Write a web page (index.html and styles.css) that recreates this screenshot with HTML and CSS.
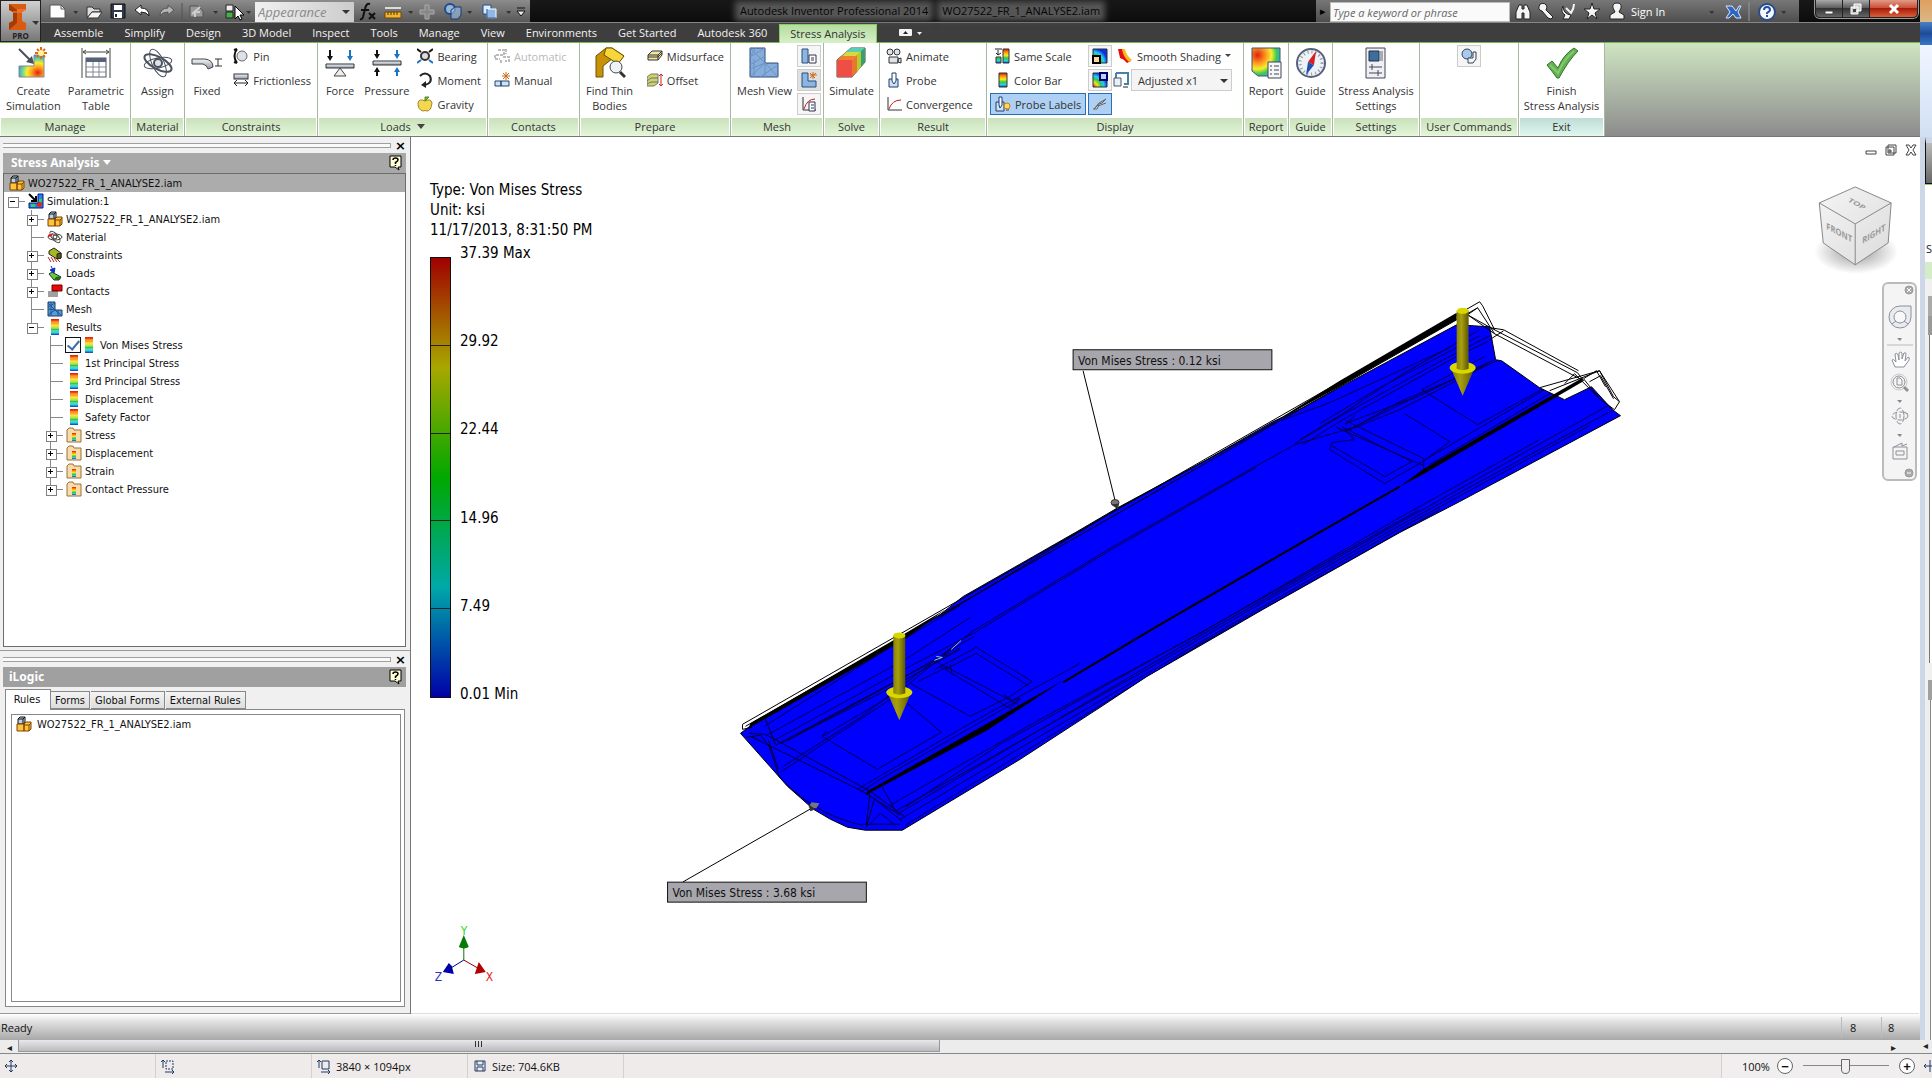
FILE: index.html
```html
<!DOCTYPE html>
<html lang="en">
<head>
<meta charset="utf-8">
<title>Autodesk Inventor Professional 2014 - WO27522_FR_1_ANALYSE2.iam</title>
<link rel="stylesheet" href="styles.css">
</head>
<body>
<svg class="defs" aria-hidden="true">
  <defs>
    <linearGradient id="rainbow" x1="0" y1="0" x2="0" y2="1"><stop offset="0" stop-color="#e01800"/><stop offset=".25" stop-color="#ff9a10"/><stop offset=".45" stop-color="#f4ec20"/><stop offset=".65" stop-color="#30c848"/><stop offset=".85" stop-color="#20d8e8"/><stop offset="1" stop-color="#1830c0"/></linearGradient>
    <radialGradient id="heat" cx=".2" cy=".25" r="1"><stop offset="0" stop-color="#e02010"/><stop offset=".3" stop-color="#ff9a20"/><stop offset=".5" stop-color="#f6ee30"/><stop offset=".68" stop-color="#40c850"/><stop offset=".85" stop-color="#30b0f0"/><stop offset="1" stop-color="#2040d0"/></radialGradient>
    <radialGradient id="heat3" cx=".75" cy=".8" r=".8"><stop offset="0" stop-color="#e02010"/><stop offset=".3" stop-color="#ff9a20"/><stop offset=".55" stop-color="#f6ee30"/><stop offset=".8" stop-color="#60d0a0"/><stop offset="1" stop-color="#3090f0"/></radialGradient>
    <radialGradient id="heat2" cx="0" cy="1" r="1.3"><stop offset="0" stop-color="#e02010"/><stop offset=".25" stop-color="#f8e020"/><stop offset=".45" stop-color="#30c850"/><stop offset=".6" stop-color="#20d0f0"/><stop offset=".8" stop-color="#1030e0"/></radialGradient>
    <linearGradient id="steel" x1="0" y1="0" x2="0" y2="1"><stop offset="0" stop-color="#f4f6f9"/><stop offset="1" stop-color="#8f9aaa"/></linearGradient>
    <linearGradient id="gold" x1="0" y1="0" x2="1" y2="0"><stop offset="0" stop-color="#8a8200"/><stop offset=".4" stop-color="#a8a010"/><stop offset="1" stop-color="#5c5600"/></linearGradient>
    <symbol id="i-asm" viewBox="0 0 16 16"><path d="M2 3l2-2h5v5l-1 2H2z" fill="#b9d0e8" stroke="#111"/><path d="M2 3h5v5M7 3l2-2" fill="none" stroke="#111"/><path d="M1 8h7v7H1zM8 8l2-2h5v7l-2 2H8z" fill="#ffc23c" stroke="#7a4300"/><path d="M8 9h5v6M13 9l2-2" fill="none" stroke="#7a4300"/></symbol>
    <symbol id="i-sim" viewBox="0 0 16 16"><path d="M10 1h5v14H1v-5h9z" fill="#2f7df0" stroke="#001a80"/><path d="M11 6h3v3h-3zM3 11h4v3H3z" fill="#28d068"/><path d="M11 9l3 1-1 4-5-1z" fill="#f02000"/><path d="M1 1l7 7M8 3v5H3" stroke="#000" stroke-width="2" fill="none"/></symbol>
    <symbol id="i-atom" viewBox="0 0 16 16"><g fill="none" stroke="#444"><ellipse cx="8" cy="8" rx="7" ry="3"/><ellipse cx="8" cy="8" rx="7" ry="3" transform="rotate(50 8 8)"/></g><circle cx="8" cy="8" r="2" fill="#fff" stroke="#222"/><path d="M1 6l5-2-1 3-4 1z" fill="#d82020"/></symbol>
    <symbol id="i-con" viewBox="0 0 16 16"><path d="M2 4l5-3 7 5v5l-4 1-8-5z" fill="#a8b820" stroke="#222"/><path d="M10 7l4-1v5l-4 1z" fill="#55600c" stroke="#222"/><path d="M1 10l3 5M4 10l3 5M7 11l3 4M10 12l3 3" stroke="#c02020"/></symbol>
    <symbol id="i-load" viewBox="0 0 16 16"><path d="M2 9l3-2 9 5-2 3H7z" fill="#68c838" stroke="#234"/><path d="M9 12l5-1-1 4H7z" fill="#27651a"/><path d="M4 1l3 6M3 5l4 3 1-5z" stroke="#1030c0" fill="#1030c0" stroke-width="1"/></symbol>
    <symbol id="i-contact" viewBox="0 0 16 16"><path d="M5 2h10v6H5z" fill="#e80808" stroke="#700"/><path d="M1 8h10v6H1z" fill="#a0a0a0"/><path d="M5 8h6" stroke="#600"/></symbol>
    <symbol id="i-mesh" viewBox="0 0 16 16"><path d="M1 1h7v8h7v6H1z" fill="#5c9ad6" stroke="#14406e"/><path d="M1 6l7-4M1 2l7 7M1 14l7-5 7 6M4 1v14M8 9l-7-1M11 9v6" stroke="#1c5590" fill="none"/></symbol>
    <symbol id="i-bar" viewBox="0 0 16 16"><path d="M4 0h8v16H4z" fill="url(#rainbow)"/><path d="M4 3h8M4 6h8M4 9h8M4 12h8" stroke="#fff" stroke-opacity=".35"/></symbol>
    <symbol id="i-folder" viewBox="0 0 16 16"><path d="M1 3l2-2h4l1 2h7v12H1z" fill="#f8dba8" stroke="#9b7136"/><path d="M6 6h4v8H6z" fill="url(#rainbow)"/></symbol>
    <symbol id="i-help" viewBox="0 0 14 16"><path d="M1 1h11v11H9l1 3-4-3H1z" fill="#ffffd8" stroke="#000"/><path d="M4 5q0-2 2.500-2T9 5q0 1-2.500 2.500V9M6.500 10v1" fill="none" stroke="#000" stroke-width="1.500"/></symbol>
  </defs>
</svg>

<div class="capture">
<div class="window">
  <header class="chrome">
    <button class="app-btn" aria-label="Application menu"><svg width="38" height="28" viewBox="0 0 38 28"><path d="M7 1h17v6l-4 2v9l4 2v7H7v-7l4-2V9L7 7z" fill="#d95b12"/><path d="M7 1l8 6v13l-8 7v-7l4-2V9L7 7z" fill="#a63a05"/><path d="M15 7h9M11 9h9" stroke="#ff8a3c"/><path d="M30 18h7l-3 4z" fill="#333"/></svg><b>PRO</b></button>
    <div class="chrome-rows">
      <div class="titlebar">
        <div class="qat">
          <svg width="212" height="22" viewBox="0 0 212 22" aria-hidden="true">
            <path d="M9 5h11l4 4v9H9z" fill="#fff" stroke="#555"/><path d="M20 5v4h4" fill="none" stroke="#555"/><path d="M32 11h5l-2 3z" fill="#333"/>
            <path d="M46 7h5l2 2h6v3h-8l-4 5h-1z" fill="#ddd" stroke="#333"/><path d="M51 12h10l-4 6H46z" fill="#f4f4f4" stroke="#333"/>
            <path d="M70 4h14v14H70z" fill="#30384a" stroke="#111"/><path d="M73 5h8v5h-8zM73 12h8v6h-8z" fill="#fff"/><path d="M75 14v3" stroke="#222" stroke-width="2"/>
            <path d="M94 10l6-5v3q8 0 8 8-2-4-8-4v3z" fill="#fff" stroke="#222"/><path d="M133 10l-6-5v3q-8 0-8 8 2-4 8-4v3z" fill="#b5b5b5" stroke="#555"/>
            <path d="M141 3v17" stroke="#555"/><path d="M149 6h8l5 5v6h-13z" fill="#999" stroke="#555"/><path d="M151 14l8-7M154 17v-5h5" stroke="#ccc" stroke-width="2" fill="none"/><path d="M172 11h5l-2 3zM205 11h5l-2 3z" fill="#333"/>
            <path d="M185 5h7v6h-7z" fill="#eee" stroke="#222"/><path d="M185 12h7v6h-7z" fill="#44b044" stroke="#222"/><path d="M194 6v13l3-3 2 4 2-1-2-4h4z" fill="#fff" stroke="#000"/>
          </svg>
          <label class="qat-select"><select aria-label="Appearance"><option>Appearance</option></select></label>
          <svg width="172" height="22" viewBox="0 0 172 22" aria-hidden="true">
            <path d="M14 4q-4-1-5 5l-2 8q-1 3-3 2M5 10h8M13 13l6 6M19 13l-6 6" fill="none" stroke="#111" stroke-width="2"/>
            <path d="M29 8h16" stroke="#ddd" stroke-width="2"/><path d="M29 12h16v6H29z" fill="#f2b632" stroke="#704800"/><path d="M32 12v3M35 12v3M38 12v3M41 12v3" stroke="#553300"/><path d="M52 11h5l-2 3zM111 11h5l-2 3zM150 11h5l-2 3z" fill="#333"/>
            <path d="M69 5h4v5h5v4h-5v5h-4v-5h-5v-4h5z" fill="#888" stroke="#aaa"/>
            <circle cx="94" cy="9" r="5" fill="#9ab4d4" stroke="#1c4d90" stroke-width="2"/><path d="M95 10l4-3h6v8l-3 4h-7z" fill="#9ebfe6" fill-opacity=".6" stroke="#123c78"/>
            <path d="M127 5h8v9h-8z" fill="#dcebff" stroke="#1c4d90"/><path d="M131 9h9v9h-9z" fill="#8fb8ea" stroke="#fff"/><path d="M131 9v9h9" fill="none" stroke="#143a78"/>
            <path d="M161 8h8M161 11h8l-4 5z" fill="#eee" stroke="#111"/>
          </svg>
        </div>
        <h1 class="title"><span>Autodesk Inventor Professional 2014</span><span>WO27522_FR_1_ANALYSE2.iam</span></h1>
        <div class="info">
          <span class="info-tri">▸</span>
          <input type="text" placeholder="Type a keyword or phrase" aria-label="Search help">
          <svg width="116" height="22" viewBox="0 0 116 22" aria-hidden="true" fill="#f4f4f4" stroke="#222">
            <path d="M6 19v-7l3-7h3v4h2V5h3l3 7v7h-6v-6h-2v6z"/><path d="M30 4q6-2 7 3l-1 3 7 7-2 2-3-1-6-7q-5-1-2-7z"/><path d="M53 6q0 8 8 9l-2 4h-6l2-4q-5-3-2-9z"/><path d="M56 8l5 5q3-5 3-9" fill="none" stroke="#f4f4f4" stroke-width="2"/><path d="M82 3l2 6h6l-5 4 2 6-5-4-5 4 2-6-5-4h6z"/><path d="M107 3q5 0 4 5l-2 4 5 3v4h-14v-4l5-3-2-4q-1-5 4-5z"/>
          </svg>
          <a class="signin" href="#signin">Sign In</a>
          <svg width="84" height="22" viewBox="0 0 84 22" aria-hidden="true"><path d="M4 11h5l-2 3zM76 11h5l-2 3z" fill="#333"/><path d="M21 6h6l4 5 3-5h2l-3 6 3 6h-5l-3-4-4 4h-3l4-6z" fill="#2f66c0" stroke="#dce8ff"/><path d="M44 2v19" stroke="#999"/><circle cx="62" cy="12" r="8" fill="#f6f8fc" stroke="#294c8a" stroke-width="2"/><path d="M59 10q0-3 3-3t3 3q0 1-3 3v1M62 15v2" fill="none" stroke="#1f4fa0" stroke-width="2"/></svg>
        </div>
        <div class="winbtns">
          <button aria-label="Minimize"><svg width="12" height="12"><path d="M2 8h8v3H2z" fill="#fff" stroke="#444"/></svg></button>
          <button aria-label="Restore"><svg width="12" height="12"><path d="M4 1h7v7H4zM1 4h7v7H1z" fill="#ccc" stroke="#fff"/><path d="M3 6h3v3H3z" fill="#444"/></svg></button>
          <button class="close" aria-label="Close"><svg width="12" height="12"><path d="M2 2l8 8M10 2l-8 8" stroke="#fff" stroke-width="3"/></svg></button>
        </div>
      </div>
      <nav class="tabs">
        <a href="#t">Assemble</a><a href="#t">Simplify</a><a href="#t">Design</a><a href="#t">3D Model</a><a href="#t">Inspect</a><a href="#t">Tools</a><a href="#t">Manage</a><a href="#t">View</a><a href="#t">Environments</a><a href="#t">Get Started</a><a href="#t">Autodesk 360</a><a href="#t" class="active">Stress Analysis</a>
        <svg width="26" height="10" viewBox="0 0 26 10" aria-hidden="true"><rect x="1" y="1" width="13" height="7" rx="1" fill="#f4f4f4"/><path d="M5 6h5L7.500 3z" fill="#222"/><path d="M19 4h5l-2.500 3z" fill="#eee"/></svg>
      </nav>
    </div>
  </header>

  <div class="ribbon">
    <section class="panel p-manage"><div class="body">
      <button class="big"><svg width="32" height="32" viewBox="0 0 32 32"><path d="M17 8h10v22H2V19h15z" fill="url(#heat3)" stroke="#888"/><path d="M2 2l13 13" stroke="#49505a" stroke-width="2"/><path d="M17 17l-8-2 6-6z" fill="#49505a"/><path d="M24 0v12M18 6h12M20 2l8 8M28 2l-8 8" stroke="#e06a10" stroke-width="2"/><circle cx="24" cy="6" r="3" fill="#fff3a0"/></svg>Create<br>Simulation</button>
      <button class="big"><svg width="32" height="32" viewBox="0 0 32 32"><path d="M2 1v30M30 1v30M3 5h26M6 3L3 5l3 2M26 3l3 2-3 2" fill="none" stroke="#444"/><rect x="6" y="11" width="20" height="19" fill="#fff" stroke="#556"/><path d="M6 11h20v4H6z" fill="#56617a"/><path d="M6 20h20M6 25h20M13 15v15M19 15v15" stroke="#889"/></svg>Parametric<br>Table</button>
    </div><h2>Manage</h2></section>
    <section class="panel p-material"><div class="body center">
      <button class="big"><svg width="32" height="32" viewBox="0 0 32 32" fill="none" stroke="#4a525e"><ellipse cx="16" cy="16" rx="14" ry="5" transform="rotate(-12 16 16)"/><ellipse cx="16" cy="16" rx="15" ry="6" transform="rotate(65 16 16)"/><ellipse cx="16" cy="16" rx="15" ry="6" transform="rotate(28 16 16)" stroke-width="2"/><circle cx="16" cy="16" r="4" fill="#dfe4ea" stroke-width="2"/></svg>Assign</button>
    </div><h2>Material</h2></section>
    <section class="panel p-constraints"><div class="body">
      <button class="big"><svg width="32" height="32" viewBox="0 0 32 32"><path d="M1 12h13q8 1 8 8l-5 2q-1-4-5-5H1z" fill="url(#steel)" stroke="#444"/><path d="M24 12h7M27 12v7M24 19h7" stroke="#333"/></svg>Fixed</button>
      <div class="col">
        <button><svg width="16" height="16"><circle cx="9" cy="8" r="5" fill="#dde2e8" stroke="#666"/><path d="M4 1Q-1 8 4 15M4 1L1 2M4 15l-3-1" fill="none" stroke="#111" stroke-width="2"/></svg>Pin</button>
        <button><svg width="16" height="16"><rect x="1" y="2" width="14" height="5" fill="url(#steel)" stroke="#333"/><path d="M1 11h14M4 8l-3 3 3 3M12 8l3 3-3 3" fill="none" stroke="#222"/></svg>Frictionless</button>
      </div>
    </div><h2>Constraints</h2></section>
    <section class="panel p-loads"><div class="body">
      <button class="big"><svg width="32" height="32" viewBox="0 0 32 32"><path d="M2 17h28v4H2z" fill="url(#steel)" stroke="#333"/><path d="M16 21l6 8H10z" fill="#eee" stroke="#444"/><path d="M6 3v8" stroke="#111" stroke-width="2"/><path d="M3 9h6l-3 5z" fill="#111"/><path d="M26 3v8" stroke="#1b74c4" stroke-width="2"/><path d="M23 9h6l-3 5z" fill="#1b74c4"/></svg>Force</button>
      <button class="big"><svg width="32" height="32" viewBox="0 0 32 32"><path d="M2 14h28v4H2z" fill="url(#steel)" stroke="#333"/><path d="M6 3v6M6 22v7" stroke="#111" stroke-width="2"/><path d="M3 7h6l-3 5zM3 25h6l-3-5z" fill="#111"/><path d="M26 3v6M26 22v7" stroke="#1b74c4" stroke-width="2"/><path d="M23 7h6l-3 5zM23 25h6l-3-5z" fill="#1b74c4"/></svg>Pressure</button>
      <div class="col">
        <button><svg width="16" height="16"><circle cx="8" cy="8" r="4" fill="#ddd" stroke="#333" stroke-width="2"/><path d="M0 1l4 3M16 1l-4 3" stroke="#111" stroke-width="2"/><path d="M0 15l4-3M16 15l-4-3" stroke="#1b74c4" stroke-width="2"/></svg>Bearing</button>
        <button><svg width="16" height="16"><path d="M3 4q5-5 10 0 3 7-5 9" fill="none" stroke="#222" stroke-width="2"/><path d="M9 9v7l-5-3z" fill="#222"/></svg>Moment</button>
        <button><svg width="16" height="16"><path d="M8 5q6-3 7 2-1 8-5 8-2-1-4 0-5-1-5-8 1-5 7-2z" fill="#f3d84e" stroke="#a8842a"/><path d="M8 5V1l4 0z" stroke="#4d8a20" fill="#7dbb40"/></svg>Gravity</button>
      </div>
    </div><h2>Loads <i class="tri"></i></h2></section>
    <section class="panel p-contacts"><div class="body">
      <div class="col">
        <button disabled><svg width="16" height="16" fill="none" stroke="#bbb"><path d="M4 2h6v5H1v4h5M9 9h6v4h-4M12 1v5M7 12v3" stroke-width="2" stroke-dasharray="3 1"/></svg>Automatic</button>
        <button><svg width="16" height="16"><path d="M1 9h6v5H1zM7 9h8v5H7z" fill="#cfe2f6" stroke="#23436e"/><path d="M12 0v8M8 4h8M9 1l6 6M15 1L9 7" stroke="#d06a10"/></svg>Manual</button>
      </div>
    </div><h2>Contacts</h2></section>
    <section class="panel p-prepare"><div class="body">
      <button class="big"><svg width="32" height="32" viewBox="0 0 32 32"><path d="M2 9L12 1h6l12 8-6 6-6-3-9 7v11H2z" fill="#c89208" stroke="#6b5200"/><path d="M12 1h6l12 8-6 8-14-9z" fill="#f6d63a" stroke="#6b5200"/><circle cx="22" cy="20" r="6" fill="#eef3f8" stroke="#444"/><path d="M26 25l5 5" stroke="#333" stroke-width="3"/></svg>Find Thin<br>Bodies</button>
      <div class="col">
        <button><svg width="16" height="16"><path d="M1 7l4-4h10v4l-4 5H1z" fill="#f0e6a0" stroke="#333"/><path d="M1 7h10l4-4M1 9h10l4-4M11 7v5" fill="none" stroke="#333"/></svg>Midsurface</button>
        <button><svg width="16" height="16"><path d="M0 5l4-3h7v9l-4 3H0z" fill="#d8cf60" stroke="#776"/><path d="M0 9l4-3h7M0 12l4-2h7" stroke="#4a7c9a" fill="none"/><path d="M14 2v12M12 4l2-2 2 2M12 12l2 2 2-2" stroke="#d02020" fill="none"/></svg>Offset</button>
      </div>
    </div><h2>Prepare</h2></section>
    <section class="panel p-mesh"><div class="body">
      <button class="big"><svg width="32" height="32" viewBox="0 0 32 32"><path d="M2 1h15v15h13v14H2z" fill="#86addb" stroke="#2b4d7a"/><path d="M2 10l15-9M2 1l15 15M2 18l15-9M2 30l15-14 13 14M8 1l-6 9M17 16L2 22M17 30V16M30 18L12 30M6 12v18" stroke="#6a93c4" fill="none"/></svg>Mesh View</button>
      <div class="col">
        <button class="mini" aria-label="Mesh settings"><svg width="16" height="16"><path d="M1 1h6v14H1z" fill="#8db5e2" stroke="#27507e"/><path d="M8 7h7v8H8z" fill="#fff" stroke="#335"/><path d="M10 10h3M10 12h3" stroke="#335"/></svg></button>
        <button class="mini shaded" aria-label="Local mesh"><svg width="16" height="16"><path d="M1 1h6v8h8v6H1z" fill="#8db5e2" stroke="#27507e"/><path d="M12 0v7M9 3h7M9 1l5 5M15 1l-6 5" stroke="#d06a10"/></svg></button>
        <button class="mini" aria-label="Convergence settings"><svg width="16" height="16"><path d="M2 1v13h13" fill="none" stroke="#333"/><path d="M3 13Q6 3 14 3" fill="none" stroke="#c02020"/><path d="M8 6h6v9H8z" fill="#fff" stroke="#335"/><path d="M10 9h3M10 12h3" stroke="#335"/></svg></button>
      </div>
    </div><h2>Mesh</h2></section>
    <section class="panel p-solve"><div class="body center">
      <button class="big"><svg width="32" height="32" viewBox="0 0 32 32"><path d="M2 13L16 1h14v14L17 30H2z" fill="#e8b830" stroke="#444"/><path d="M2 13h15v17H2z" fill="#ee4e44"/><path d="M2 13L7 9h14l-4 4z" fill="#f08030"/><path d="M7 9l4-4h15l-5 4z" fill="#d8d840"/><path d="M11 5l5-4h14l-4 4z" fill="#58d0b0"/><path d="M17 13l5-5v17l-5 5z" fill="#e87830"/><path d="M22 8l4-4v16l-4 5z" fill="#b8c830"/><path d="M26 4l4-3v14l-4 5z" fill="#38a070"/></svg>Simulate</button>
    </div><h2>Solve</h2></section>
    <section class="panel p-result"><div class="body">
      <div class="col">
        <button><svg width="16" height="16" fill="#dfe3e8" stroke="#333"><circle cx="4" cy="4" r="3"/><circle cx="11" cy="4" r="3"/><path d="M3 9h9v6H3zM12 11l3-1v5l-3-1z"/></svg>Animate</button>
        <button><svg width="16" height="16"><path d="M3 7h9v8H3z" fill="#cfe0f4" stroke="#1d3f70"/><path d="M6 1h4v8l-2 3-2-3z" fill="#fff" stroke="#1d3f70"/></svg>Probe</button>
        <button><svg width="16" height="16" fill="none"><path d="M2 1v13h14" stroke="#333"/><path d="M3 13Q6 4 15 4" stroke="#c02020"/></svg>Convergence</button>
      </div>
    </div><h2>Result</h2></section>
    <section class="panel p-display"><div class="body">
      <div class="col">
        <button><svg width="16" height="16"><path d="M9 1h6v14H9zM2 9h5v6H2z" fill="url(#rainbow)" stroke="#333"/><path d="M1 1h7M4 2v5M2 5l2 2 3-2" stroke="#222" fill="none"/></svg>Same Scale</button>
        <button><svg width="16" height="16"><path d="M5 1h8v14H5z" fill="url(#rainbow)" stroke="#333"/></svg>Color Bar</button>
        <button class="on"><svg width="16" height="16"><path d="M1 6h8v9H1z" fill="#cfe0f4" stroke="#1d3f70"/><path d="M4 1h3v8l-2 3-1-3z" fill="#fff" stroke="#1d3f70"/><circle cx="12" cy="10" r="3" fill="#ffd860" stroke="#c08010"/><path d="M11 13h3v2h-3z" fill="#888"/></svg>Probe Labels</button>
      </div>
      <div class="col">
        <button class="mini" aria-label="Maximum value"><svg width="16" height="16"><path d="M1 1h14v14H1z" fill="url(#heat2)" stroke="#234"/><path d="M1 8h7v7H1z" fill="#f8d8a0" stroke="#000" stroke-width="2"/></svg></button>
        <button class="mini" aria-label="Minimum value"><svg width="16" height="16"><path d="M1 1h14v14H1z" fill="url(#heat2)" stroke="#234"/><path d="M8 1h7v7H8z" fill="#c0d0f8" stroke="#000070" stroke-width="2"/></svg></button>
        <button class="mini on" aria-label="Boundary conditions"><svg width="16" height="16"><path d="M2 13l5-6 7-4-4 4-3 1zM1 13h4l2-4M6 10l8-3" fill="#d0d0d0" stroke="#666"/></svg></button>
      </div>
      <div class="col">
        <button><svg width="16" height="16"><path d="M1 1h6q1 7 7 12l-4 2Q7 11 3 10z" fill="#e01010"/><path d="M5 1l3 0q1 6 7 11l-3 2Q6 9 5 1z" fill="#ffb820"/></svg>Smooth Shading <i class="tri small"></i></button>
        <label class="adjust"><svg width="16" height="16"><path d="M3 1h12v11h-4M3 1v5" fill="none" stroke="#4a80a8" stroke-width="2"/><path d="M1 6h7v8H1z" fill="#eaf1f8" stroke="#456"/><path d="M10 15h5" stroke="#222"/></svg><span class="adjust-box"><select aria-label="Displacement scale"><option>Adjusted x1</option></select></span></label>
      </div>
    </div><h2>Display</h2></section>
    <section class="panel p-report"><div class="body center">
      <button class="big"><svg width="32" height="32" viewBox="0 0 32 32"><path d="M2 1h28v28H8l-6-5z" fill="url(#heat)" stroke="#456"/><path d="M18 15h13v16H18z" fill="#f4f6f8" stroke="#445"/><path d="M20 19h2M20 23h2M20 27h2M24 19h5M24 23h5M24 27h5" stroke="#445"/></svg>Report</button>
    </div><h2>Report</h2></section>
    <section class="panel p-guide"><div class="body center">
      <button class="big"><svg width="32" height="32" viewBox="0 0 32 32"><circle cx="16" cy="16" r="14" fill="#eef1f5" stroke="#56627a" stroke-width="2"/><circle cx="16" cy="16" r="11" fill="none" stroke="#8a95a8" stroke-width="3" stroke-dasharray="1 3"/><path d="M21 4l-2 14-6-3z" fill="#d62020"/><path d="M11 28l2-13 6 3z" fill="#2050b0"/></svg>Guide</button>
    </div><h2>Guide</h2></section>
    <section class="panel p-settings"><div class="body center">
      <button class="big"><svg width="32" height="32" viewBox="0 0 32 32"><path d="M6 1h19v30H6z" fill="#eef0f3" stroke="#445"/><path d="M9 4h10v10H9z" fill="#3f6d9e" stroke="#234"/><path d="M20 4h3v10h-3z" fill="#aab"/><path d="M9 20h13M12 17v6M9 26h13M18 23v6" stroke="#445"/></svg>Stress Analysis<br>Settings</button>
    </div><h2>Settings</h2></section>
    <section class="panel p-user"><div class="body center">
      <div class="col"><button class="mini" aria-label="User command"><svg width="16" height="16"><circle cx="6" cy="6" r="5" fill="#a9c9ee" stroke="#345"/><path d="M7 11v4h5l3-4V4h-3v6H7z" fill="#f4f6f8" stroke="#345"/></svg></button></div>
    </div><h2>User Commands</h2></section>
    <section class="panel p-exit"><div class="body center">
      <button class="big"><svg width="32" height="32" viewBox="0 0 32 32"><path d="M1 18l5-4 6 7Q17 8 28 1l4 3Q22 14 13 31h-2Q6 24 1 18z" fill="#62b24e" stroke="#2f7226"/><path d="M4 18l8 8Q18 12 28 4" fill="none" stroke="#86c874" stroke-width="2"/></svg>Finish<br>Stress Analysis</button>
    </div><h2>Exit</h2></section>
  </div>

  <div class="workspace">
    <aside class="docks">
      <section class="dock dock-tree">
        <div class="grip"><span></span><button aria-label="Close panel">×</button></div>
        <header class="dock-head"><h2>Stress Analysis <i class="tri white"></i></h2><svg width="14" height="16"><use href="#i-help"/></svg></header>
        <div class="tree">
          <div class="row root"><svg width="16" height="16"><use href="#i-asm"/></svg>WO27522_FR_1_ANALYSE2.iam</div>
          <ul>
            <li><div class="row"><b class="ex minus"></b><svg width="16" height="16"><use href="#i-sim"/></svg>Simulation:1</div>
              <ul>
                <li><div class="row"><b class="ex plus"></b><svg width="16" height="16"><use href="#i-asm"/></svg>WO27522_FR_1_ANALYSE2.iam</div></li>
                <li><div class="row"><b class="ex"></b><svg width="16" height="16"><use href="#i-atom"/></svg>Material</div></li>
                <li><div class="row"><b class="ex plus"></b><svg width="16" height="16"><use href="#i-con"/></svg>Constraints</div></li>
                <li><div class="row"><b class="ex plus"></b><svg width="16" height="16"><use href="#i-load"/></svg>Loads</div></li>
                <li><div class="row"><b class="ex plus"></b><svg width="16" height="16"><use href="#i-contact"/></svg>Contacts</div></li>
                <li><div class="row"><b class="ex"></b><svg width="16" height="16"><use href="#i-mesh"/></svg>Mesh</div></li>
                <li><div class="row"><b class="ex minus"></b><svg width="16" height="16"><use href="#i-bar"/></svg>Results</div>
                  <ul>
                    <li><label class="row"><b class="ex"></b><input type="checkbox" checked><svg width="16" height="16"><use href="#i-bar"/></svg>Von Mises Stress</label></li>
                    <li><div class="row"><b class="ex"></b><svg width="16" height="16"><use href="#i-bar"/></svg>1st Principal Stress</div></li>
                    <li><div class="row"><b class="ex"></b><svg width="16" height="16"><use href="#i-bar"/></svg>3rd Principal Stress</div></li>
                    <li><div class="row"><b class="ex"></b><svg width="16" height="16"><use href="#i-bar"/></svg>Displacement</div></li>
                    <li><div class="row"><b class="ex"></b><svg width="16" height="16"><use href="#i-bar"/></svg>Safety Factor</div></li>
                    <li><div class="row"><b class="ex plus"></b><svg width="16" height="16"><use href="#i-folder"/></svg>Stress</div></li>
                    <li><div class="row"><b class="ex plus"></b><svg width="16" height="16"><use href="#i-folder"/></svg>Displacement</div></li>
                    <li><div class="row"><b class="ex plus"></b><svg width="16" height="16"><use href="#i-folder"/></svg>Strain</div></li>
                    <li><div class="row"><b class="ex plus"></b><svg width="16" height="16"><use href="#i-folder"/></svg>Contact Pressure</div></li>
                  </ul></li>
              </ul></li>
          </ul>
        </div>
      </section>
      <section class="dock dock-ilogic">
        <div class="grip"><span></span><button aria-label="Close panel">×</button></div>
        <header class="dock-head"><h2>iLogic</h2><svg width="14" height="16"><use href="#i-help"/></svg></header>
        <div class="ltabs"><button class="sel">Rules</button><button>Forms</button><button>Global Forms</button><button>External Rules</button></div>
        <div class="lpane"><div class="lbox"><div class="row"><svg width="16" height="16"><use href="#i-asm"/></svg>WO27522_FR_1_ANALYSE2.iam</div></div></div>
      </section>
    </aside>

    <main class="view">
      <svg class="scene" viewBox="411 137 1508 877" role="img" aria-label="Von Mises stress result">
        <defs>
          <linearGradient id="cf" x1="0" y1="0" x2="1" y2="1"><stop offset="0" stop-color="#f4f4f4"/><stop offset="1" stop-color="#dcdcdc"/></linearGradient>
          <radialGradient id="sh"><stop offset="0" stop-color="#999"/><stop offset="1" stop-color="#fff"/></radialGradient>
          <path id="hull" d="M740 734L748 728 870 658 940 615 963 597 1077 532 1118 508 1207 460 1273 422 1303 408 1343 386 1457 325 1490 327 1496 360 1502 361 1540 388 1565 400 1592 387 1613 410 1621 416 1460 502 1400 533 1263 610 1147 677 1100 708 1020 760 902 831H865L847 828 830 820 813 810 787 787 772 770z"/>
          <clipPath id="hullclip"><use href="#hull"/></clipPath>
          <g id="arrow"><path d="M-12 60L0 88l12-28z" fill="url(#gold)"/><ellipse cy="60" rx="13" ry="6" fill="#d8d800"/><path d="M-6 3v58q6 3 12 0V3z" fill="url(#gold)"/><ellipse cy="3" rx="6" ry="3" fill="#d8d800"/></g>
        </defs>
        <use href="#hull" fill="#00f" stroke="#000"/>
        <g fill="#000"><path d="M748 729L750 724 903 635 945 610 903 641z"/><path d="M1265 428L1340 381 1457 313v7L1343 385z"/><path d="M865 796L867 792 1063 681 987 731z"/><path d="M1400 487L1423 470 1583 378v4L1423 475z"/></g>
        <g fill="none" stroke="#000">
          <path d="M742 725L1480 302 1483 306 1495 330M742 725v5l10-2M745 727L1478 308l17 26M940 617L1118 509 1273 424M1468 315l23 13 87 45 6 8-89-47-27-19M1478 308l-13 9M1491 328l13 2 75 41M1490 340l14-9"/>
          <path d="M1550 391l50-20 14 26 6 5-5 8-15-11-16-20 13-8 9 16M1540 388l60-17 20 31M1565 384l10-10 25 25M1590 382l11-6 13 23"/>
          <path d="M1063 683L1157 627 1307 540 1400 487" stroke-width="2"/>
        </g>
        <g fill="none" stroke="#00004c" clip-path="url(#hullclip)">
          <path d="M780 773L890 700 972 632 1027 599 1113 547 1257 466 1295 445 1353 428 1400 405 1495 360M783 767L860 718 970 634"/>
          <path d="M772 742L900 672 975 633 1027 601 1113 549 1256 468M775 746L910 674 974 637M768 735L905 660 970 618M764 727L880 654 960 606M780 744L880 694 960 650M786 742L900 680M795 736L950 653"/>
          <path d="M1303 445L1343 420 1460 355 1490 341M1295 444L1345 414 1440 362 1490 336M1320 424L1380 388 1480 336M1300 440L1343 414 1400 376 1480 330M1345 424L1420 396 1490 362M1350 430L1400 402 1500 360M1270 425L1330 403 1450 348M1345 432L1400 410 1490 364"/>
          <path d="M750 737L862 792 900 816M748 734L765 735 870 792 905 818M765 720L775 745M768 741L778 770M783 790L768 745M745 738L760 736 770 748M870 790L866 826M874 800L866 828M872 798L902 822M882 788L895 811M868 826l12-12 15 12M862 825H900M772 770Q810 815 862 826" stroke="#000030"/>
          <path d="M895 812L1000 753 1147 670 1263 603 1400 526 1460 493 1618 408M897 815L1010 748 1190 642 1400 523 1612 404M900 820L1050 731 1200 643 1400 529 1590 426M905 826L1030 749 1200 645 1440 510M905 808L1000 745 1260 600 1420 510M890 806L1040 720 1200 634 1400 518 1540 440"/>
          <path d="M857 790L970 724 1080 664M860 793L880 780 1020 700M1430 465L1560 388M1424 461L1562 380"/>
          <path d="M822 737L895 694 941 733 877 770zM822 737l4-6M910 684L970 717 1010 697 1032 682 976 648 935 670M945 670L976 654 1028 686M935 662L1018 705M940 667L1015 712M950 665L952 676M1003 695l9 6 8-2-10 10M918 682l30-15M960 648L935 664" />
          <path d="M1405 414L1450 442 1423 462 1385 484 1330 450 1332 443 1355 440 1347 432 1337 428 1424 466M1346 421L1424 459v12M1342 427L1412 462M1346 425l10-10M1332 446L1385 477 1412 462M1422 390L1478 425 1560 380M1422 390L1485 357"/>
        </g>
        <path d="M934 661l8-3-6-1M951 650l10-9" stroke="#8ac8ff" fill="none"/>
        <use href="#arrow" x="899" y="633"/><use href="#arrow" x="1463" y="308"/>
        <path d="M1083 371L1116 505M682 883L813 808" stroke="#000"/>
        <ellipse cx="1115" cy="503" rx="4" ry="3" fill="#777" stroke="#333"/><path d="M1111 505l7 5 1-6z" fill="#333"/><path d="M808 808l3-5 8 1-3 5z" fill="#777"/><path d="M808 805l7 5-5 2z" fill="#333"/>
        <g class="probe"><rect x="1073" y="350" width="199" height="20"/><text x="1078" y="365">Von Mises Stress : 0.12 ksi</text><rect x="667" y="883" width="199" height="20"/><text x="672" y="898">Von Mises Stress : 3.68 ksi</text></g>
        <ellipse cx="1857" cy="252" rx="42" ry="22" fill="url(#sh)"/>
        <path d="M1820 203L1856 187l36 16-3 40-33 22-32-22z" fill="url(#cf)" stroke="#888"/><path d="M1820 203l36 21 36-21M1856 224v41" fill="none" stroke="#888"/>
        <g class="cube"><text transform="matrix(.9 .5 -.5 .5 1848 201)">TOP</text><text transform="matrix(.85 .45 0 1 1827 229)">FRONT</text><text transform="matrix(.85 -.5 0 1 1863 244)">RIGHT</text></g>
        <path d="M463 961V940" stroke="#0a7a0a"/><path d="M458 948l5-12 5 12q-5 3-10 0z" fill="#087a08"/><path d="M463 961l14 8" stroke="#800"/><path d="M478 963l7 10-11 2z" fill="#b00000"/><path d="M463 961l-13 8" stroke="#008"/><path d="M448 964l-6 9 11 2-2-8z" fill="#0000a8"/>
        <g class="axis"><text x="460" y="936" fill="#28d828">Y</text><text x="485" y="982" fill="#e02020">X</text><text x="434" y="982" fill="#3030c0">Z</text></g>
      </svg>
      <div class="legend">
        <p>Type: Von Mises Stress<br>Unit: ksi<br>11/17/2013, 8:31:50 PM</p>
        <div class="scale"><div class="ramp"><i></i><i></i><i></i><i></i><i></i></div><ol><li>37.39 Max</li><li>29.92</li><li>22.44</li><li>14.96</li><li>7.49</li><li>0.01 Min</li></ol></div>
      </div>
      <div class="docbtns">
        <button aria-label="Minimize document"><svg width="14" height="14"><path d="M2 8h10v3H2z" fill="#fff" stroke="#444"/></svg></button>
        <button aria-label="Restore document"><svg width="14" height="14" fill="#fff" stroke="#444"><path d="M4 2h8v8H4zM2 4h8v8H2z"/><path d="M5 7h2v2H5z"/></svg></button>
        <button aria-label="Close document"><svg width="14" height="14"><path d="M2 2h3l2 3 2-3h3L9 7l3 5H9L7 9l-2 3H2l3-5z" fill="#fff" stroke="#444"/></svg></button>
      </div>
      <div class="navbar">
        <svg width="34" height="197" viewBox="0 0 34 197" fill="none" stroke="#8c9098">
          <circle cx="26" cy="6" r="4" fill="#aaa" stroke="#999"/><path d="M24 4l4 4M28 4l-4 4" stroke="#fff"/>
          <path d="M17 22h11v11a11 11 0 1 1-11-11z" fill="#e8ebf0"/><circle cx="17" cy="33" r="6" fill="#f8f8f8"/><path d="M9 40l4-3M25 40l-4-3"/>
          <path d="M14 54h5l-2 3zM14 116h5l-2 3zM14 150h5l-2 3z" fill="#888" stroke="none"/><path d="M4 61h26" stroke="#bbb"/>
          <path d="M12 83l-3-7q1-2 4 2l-1-8q2-2 3 1l1 5V69q2-2 3 0v6l2-6q2-1 2 1l-1 7 3-4q2 0 1 3l-5 7z" fill="#fff"/>
          <circle cx="16" cy="98" r="6"/><circle cx="16" cy="98" r="8" stroke="#ccc"/><path d="M14 94h3l2 2v5h-5z"/><path d="M21 103l4 4" stroke-width="3"/>
          <ellipse cx="17" cy="132" rx="8" ry="4" stroke-dasharray="5 2"/><ellipse cx="17" cy="132" rx="4" ry="8" stroke-dasharray="6 2"/><path d="M17 130v4M21 128l4 2"/>
          <path d="M10 163h14v12H10zM13 167h8v4h-8zM11 163l8-4v3l5-2"/>
          <circle cx="26" cy="189" r="4" fill="#aaa" stroke="#999"/><path d="M24 189h4" stroke="#fff"/>
        </svg>
      </div>
    </main>
  </div>

  <div class="status"><span>Ready</span><span class="count">8</span><span class="count last">8</span></div>
  <div class="hscroll"><button aria-label="Scroll left">◂</button><div class="track"><div class="thumb"><i></i><i></i><i></i></div></div><button aria-label="Scroll right">▸</button></div>
  <footer class="imgbar">
    <span class="cell"><svg width="16" height="16" fill="none" stroke="#1e3a66"><path d="M1 8h12M7 2v12M3 6L1 8l2 2M11 6l2 2-2 2M5 4l2-2 2 2M5 12l2 2 2-2"/></svg></span>
    <span class="cell"><svg width="16" height="16" fill="none" stroke="#1e3a66"><path d="M3 2v8M1 4l2-2 2 2M5 14h9M12 12l2 2-2 2"/><path d="M6 3h7v8H6z" stroke-dasharray="2 1"/></svg></span>
    <span class="cell"><svg width="16" height="16" fill="none" stroke="#1e3a66"><path d="M3 2v8M1 4l2-2 2 2M5 14h9M12 12l2 2-2 2M6 3h7v8H6z"/></svg>3840 × 1094px</span>
    <span class="cell"><svg width="16" height="16" fill="none" stroke="#1e3a66"><path d="M3 3h10v10H3zM5 3v4h6V3M5 13V9h6v4"/></svg>Size: 704.6KB</span>
    <div class="zoom"><label for="zm">100%</label><button aria-label="Zoom out">−</button><input id="zm" type="range" min="0" max="100" value="50"><button aria-label="Zoom in">+</button></div>
  </footer>
</div>
<div class="next" aria-hidden="true">
  <div class="n-title"></div><div class="n-blue"></div><div class="n-sky"></div>
  <div class="n-app"><div class="n-btn"></div><div class="n-rib">S</div><div class="n-lab"></div><div class="n-grip"></div><div class="n-head"></div><div class="n-tree"></div><div class="n-gap"></div><div class="n-head2"></div><div class="n-tree2"></div></div>
  <div class="n-scroll">◂</div><div class="n-foot"><svg width="16" height="16" fill="none" stroke="#1e3a66"><path d="M1 8h12M7 2v12M3 6L1 8l2 2"/></svg></div>
</div>
</div>
</body>
</html>
```
FILE: styles.css
```css
* { box-sizing: border-box; }
body { margin: 0; min-height: 100vh; padding-bottom: 14px; background: #fff; color: #222; font: 11px/15px "Open Sans", "Noto Sans", sans-serif; display: flex; overflow: hidden; }
button, input, select { font: inherit; color: inherit; }
button { border: 0; padding: 0; background: none; white-space: nowrap; }
h1, h2, p, ul, ol { margin: 0; padding: 0; font: inherit; list-style: none; }
svg { display: block; flex: none; }
a { color: inherit; text-decoration: none; }
.defs { position: absolute; width: 0; height: 0; }
.capture { flex: 1; min-width: 0; display: grid; grid-template-columns: minmax(0, 1fr) 12px; }
.window { display: flex; flex-direction: column; min-width: 0; }

/* title bar and tabs */
.chrome { display: flex; background: #3e3e3e; border-bottom: 1px solid #79b455; }
.app-btn { width: 41px; display: flex; flex-direction: column; align-items: center; padding: 2px 0 0; background: linear-gradient(#d0d0d0, #777); border: 1px solid #222; font-size: 8px; line-height: 10px; }
.chrome-rows { flex: 1; min-width: 0; }
.titlebar { height: 23px; display: flex; background: linear-gradient(#181818, #0c0c0c); border-bottom: 1px solid #888; }
.qat { display: flex; gap: 2px; background: linear-gradient(#8c8c8c, #585858); width: 489px; }
.qat-select, .adjust-box { position: relative; display: block; }
.qat-select select { width: 99px; height: 20px; margin-top: 2px; padding: 0 3px; border: 0; background: linear-gradient(90deg, #f0f0f0, #ccc); color: #8a8a8a; font-style: italic; font-size: 13px; appearance: none; border-radius: 0; }
.qat-select::after, .adjust-box::after { content: ""; position: absolute; right: 4px; top: 10px; border: 4px solid transparent; border-top-color: #333; border-bottom: 0; }
.title { flex: 1; display: flex; justify-content: center; align-items: center; gap: 14px; padding-right: 6px; color: #050505; }
.title span { background: #555; box-shadow: 0 0 6px 5px #555; line-height: 10px; }
.info { width: 483px; display: flex; background: linear-gradient(#777, #4e4e4e); }
.info-tri { width: 14px; text-align: center; line-height: 22px; color: #000; }
.info input { width: 180px; height: 20px; margin: 2px 0 0; border: 1px solid #bbb; background: #fafafa; padding: 0 2px; }
.info input::placeholder { color: #666; font-style: italic; opacity: 1; }
.signin { color: #fff; line-height: 24px; padding-left: 5px; width: 79px; }
.winbtns { margin: 0 2px 3px 16px; height: 18px; display: flex; border: 1px solid #222; border-top: 0; border-radius: 0 0 5px 5px; overflow: hidden; box-shadow: 0 0 0 1px #999; }
.winbtns button { width: 27px; display: grid; place-items: center; background: linear-gradient(#aaa, #555 50%, #333 50%, #666); border-right: 1px solid #222; }
.winbtns .close { width: 47px; background: linear-gradient(#e09a88, #c94a30 50%, #a81c08 50%, #d8603c); border: 0; }
.tabs { height: 19px; display: flex; gap: 1px; color: #f2f2f2; line-height: 19px; padding-left: 3px; }
.tabs a { padding: 0 10px; white-space: nowrap; }
.tabs .active { background: linear-gradient(#b4dca0, #d6f0c8); color: #333; margin: 1px 0 -1px 1px; border: 1px solid #86cf5c; border-bottom: 0; line-height: 17px; }
.tabs svg { align-self: center; margin-left: 20px; }

/* ribbon */
.ribbon { display: flex; height: 94px; background: linear-gradient(#cfe5c2, #8c8c8c); border-bottom: 1px solid #777; color: #333; }
.panel { display: flex; flex-direction: column; border-right: 1px solid #a8b8a0; background: #fff; flex: none; }
.panel h2 { height: 18px; line-height: 18px; margin: 0 1px 0 1px; text-align: center; background: linear-gradient(#cae0bc, #e2f6d6); border-bottom: 1px solid #e8f8e0; white-space: nowrap; }
.p-exit h2 { background: linear-gradient(#c0dcd4, #dcf6ee); }
.body { flex: 1; display: flex; justify-content: space-between; padding: 1px 6px 0; }
.center { justify-content: center; padding: 1px 0 0; }
.big { display: flex; flex-direction: column; align-items: center; align-self: flex-start; text-align: center; line-height: 15px; padding-top: 3px; white-space: nowrap; }
.big svg { margin-bottom: 4px; }
.col { display: grid; grid-template-rows: 24px 24px 24px; align-items: center; align-content: start; }
.col button { display: flex; align-items: center; gap: 4px; height: 22px; }
.col button:disabled { color: #b8b8b8; }
.col .mini { width: 24px; justify-content: center; border: 1px solid #ccc; background: #f6f6f6; }
.col .shaded { background: #e0e0e0; }
.col .on { background: #aed0f4; border: 1px solid #2870b8; }
.tri { display: inline-block; border: 4px solid transparent; border-top: 5px solid #444; border-bottom: 0; margin: 0 0 2px 3px; }
.tri.small { border-width: 3px 3px 0; margin-left: 0; }
.tri.white { border-width: 5px 4px 0; border-top-color: #fff; margin-left: 0; }
.p-manage { width: 131px; } .p-material { width: 54px; } .p-constraints { width: 133px; } .p-loads { width: 170px; }
.p-contacts { width: 92px; } .p-prepare { width: 151px; } .p-mesh { width: 93px; } .p-solve { width: 56px; }
.p-result { width: 107px; } .p-display { width: 257px; } .p-report { width: 45px; } .p-guide { width: 44px; }
.p-settings { width: 87px; } .p-user { width: 99px; } .p-exit { width: 86px; }
.p-mesh .body { padding-right: 2px; }
.p-display .body { padding: 1px 8px 0 3px; }
.p-display .col button:not(.mini) { padding: 0 4px; }
.adjust { display: flex; gap: 2px; align-items: center; }
.adjust-box select { width: 101px; height: 22px; border: 1px solid #ccc; background: #f4f4f4; padding: 0 6px; appearance: none; border-radius: 0; display: block; }

/* docked panels */
.workspace { flex: 1; display: flex; min-height: 0; }
.docks { width: 411px; background: #f0f0f0; border-right: 1px solid #777; display: flex; flex-direction: column; font-family: "DejaVu Sans Condensed", "DejaVu Sans", sans-serif; font-stretch: condensed; font-size: 11px; color: #111; }
.dock { padding: 2px 4px 3px 3px; border-bottom: 1px solid #999; display: flex; flex-direction: column; }
.dock-tree { flex: 517; } .dock-ilogic { flex: 360; padding-bottom: 6px; }
.grip { display: flex; height: 12px; gap: 4px; align-items: center; margin-bottom: 2px; }
.grip span { flex: 1; height: 5px; border: 1px solid #a0a0a0; border-left: 0; background: #fafafa; }
.grip button { width: 11px; font: bold 13px/11px "DejaVu Sans", sans-serif; color: #000; }
.dock-head { height: 20px; background: #a8a8a8; color: #fff; display: flex; align-items: center; justify-content: space-between; padding: 0 3px 0 8px; }
.dock-ilogic .dock-head { background: #a0a0a0; padding-left: 6px; }
.dock-head h2 { font: bold 12px/20px "Noto Sans", sans-serif; }
.tree { flex: 1; background: #fff; border: 1px solid #6c6c6c; }
.row { display: flex; align-items: center; height: 18px; gap: 3px; white-space: nowrap; position: relative; }
.root { background: #acacac; padding-left: 5px; }
.tree ul { padding-left: 4px; }
.tree ul ul { padding-left: 19px; }
.tree li { position: relative; }
.tree ul ul > li::before { content: ""; position: absolute; left: 4px; top: 0; bottom: 0; border-left: 1px solid #888; }
.tree ul ul > li:last-child::before { bottom: auto; height: 9px; }
.ex { width: 17px; height: 9px; position: relative; flex: none; background: linear-gradient(#888, #888) 4px 4px / 13px 1px no-repeat; }
.plus::before, .minus::before { content: ""; position: absolute; left: 0; top: 0; width: 9px; height: 9px; border: 1px solid #808080; background: linear-gradient(#000, #000) 1px 3px / 5px 1px no-repeat, #fff; }
.plus::after { content: ""; position: absolute; left: 4px; top: 2px; width: 1px; height: 5px; background: #000; }
.tree input { appearance: none; width: 16px; height: 16px; margin: 0 -3px 0 -1px; border: 1px solid #111; background: #fff; display: grid; place-items: center; }
.tree input:checked::before { content: ""; width: 5px; height: 10px; border: solid #3a6ea8; border-width: 0 2px 2px 0; transform: rotate(40deg); margin-top: -3px; }
.ltabs { display: flex; align-items: flex-end; margin: 2px 0 -1px 2px; height: 21px; position: relative; }
.ltabs button { height: 18px; padding: 0 4px; border: 1px solid #888; background: linear-gradient(#f4f4f4, #ddd); border-left-width: 0; margin-right: 1px; margin-bottom: 1px; }
.ltabs .sel { height: 21px; width: 46px; padding: 0 8px 2px 6px; margin: 0; background: #fff; border-width: 1px 1px 0; }
.lpane { flex: 1; display: flex; margin: 0 1px 0 2px; padding: 4px 3px 4px 5px; background: #fff; border: 1px solid #888; }
.lbox { flex: 1; border: 1px solid #888; padding: 0 4px; }
.lbox .row { gap: 5px; }

/* graphics area */
.view { flex: 1; min-width: 0; position: relative; background: #fff; border-bottom: 1px solid #ddd; margin-right: 1px; }
.scene { position: absolute; inset: 0; width: 100%; height: 100%; }
.probe rect { fill: #a6a6ac; stroke: #111; }
.probe text, .axis text { font: 12px "DejaVu Sans Condensed", "DejaVu Sans", sans-serif; font-stretch: condensed; }
.probe text { fill: #111; }
.cube text { font: bold 9px "Open Sans", sans-serif; fill: #999; }
.legend { position: absolute; left: 19px; top: 43px; font: 15px/20px "DejaVu Sans Condensed", "DejaVu Sans", sans-serif; font-stretch: condensed; color: #000; }
.scale { display: flex; gap: 9px; padding-top: 17px; }
.ramp { width: 21px; height: 441px; border: 1px solid #111; background: linear-gradient(#a00000, #a8a800 25%, #00a800 50%, #00a8a8 75%, #0000a8); display: grid; grid-template-rows: repeat(5, 1fr); }
.ramp i:not(:last-child) { border-bottom: 1px solid #222; }
.scale ol { height: 461px; margin-top: -14px; display: flex; flex-direction: column; justify-content: space-between; }
.docbtns { position: absolute; right: 1px; top: 6px; display: flex; gap: 6px; }
.navbar { position: absolute; right: 2px; top: 145px; border: 2px solid #bbb; border-radius: 6px; background: #f4f4f4; width: 35px; height: 199px; display: flex; justify-content: center; }

/* bottom bars */
.status { height: 26px; display: flex; align-items: center; background: linear-gradient(#fff, #e0e0e0 30%, #a8a8a8); padding: 1px 1px 0; color: #111; }
.count { margin-left: auto; width: 40px; padding-left: 8px; border-left: 1px solid #bbb; line-height: 22px; }
.last { margin-left: 0; width: 38px; padding-left: 6px; }
.hscroll { height: 14px; display: flex; background: #ececec; border-bottom: 1px solid #888; }
.hscroll button { width: 18px; line-height: 10px; font-size: 10px; }
.hscroll button:last-child { margin-right: 18px; }
.track { flex: 1; }
.thumb { width: 49.4%; height: 12px; border: 1px solid #999; border-top: 0; background: linear-gradient(#e8e8ea, #bcbcc0); display: flex; justify-content: center; gap: 2px; padding-top: 1px; }
.thumb i { width: 1px; height: 6px; background: #333; }
.imgbar { height: 24px; background: #efebea; display: flex; color: #111; }
.cell { flex: 0 0 156px; border-right: 1px solid #d4d0d0; display: flex; align-items: center; gap: 4px; padding-left: 4px; }
.zoom { margin-left: auto; width: 199px; border-left: 1px solid #d4d0d0; display: flex; align-items: center; padding-left: 20px; gap: 7px; background: #f0eeee; }
.zoom button { width: 16px; height: 16px; border: 1px solid #666; border-radius: 50%; background: #fff; font: bold 13px/13px "Liberation Sans", sans-serif; }
.zoom input { width: 86px; height: 16px; margin: 0 3px; appearance: none; background: linear-gradient(#888, #888) 0 7px / 100% 1px no-repeat; }
.zoom input::-webkit-slider-thumb { appearance: none; width: 9px; height: 15px; border: 1px solid #666; border-radius: 1px 1px 5px 5px; background: #f0f0f0; }

/* edge of the second monitor */
.next { display: flex; flex-direction: column; overflow: hidden; }
.n-title { height: 22px; background: linear-gradient(#e0a060, #d8b888); }
.n-blue { height: 23px; background: linear-gradient(#4a80c8, #1d4c98 50%, #3a78c4); }
.n-sky { height: 92px; background: linear-gradient(#f0f6ff, #d0e0f4); }
.n-app { flex: 1; border-left: 5px solid #cdd7e7; display: flex; flex-direction: column; }
.n-btn { height: 47px; border: 1px solid #111; border-width: 6px 0 1px 1px; border-top-color: #cdd7e7; background: linear-gradient(#bbb, #666); }
.n-rib { height: 78px; border-top: 1px solid #86cf5c; padding: 56px 0 0 1px; background: #fff; }
.n-lab { height: 17px; background: #d6ecc8; }
.n-grip { height: 17px; background: #f0f0f0; }
.n-head { height: 39px; background: linear-gradient(#aaa 52%, #999 52%); border-left: 3px solid #f0f0f0; }
.n-tree { flex: 315; border-left: 4px solid #eee; box-shadow: inset 1px 0 #777; }
.n-gap { height: 17px; background: #f0f0f0; }
.n-head2 { height: 20px; background: #a0a0a0; border-left: 3px solid #f0f0f0; }
.n-tree2 { flex: 327; border-left: 5px solid #eee; box-shadow: inset 1px 0 #888; }
.n-scroll { height: 14px; background: #ececec; border-bottom: 1px solid #888; font-size: 10px; line-height: 10px; padding-left: 3px; }
.n-foot { height: 24px; background: #efebea; padding: 4px 0 0 3px; }
```
